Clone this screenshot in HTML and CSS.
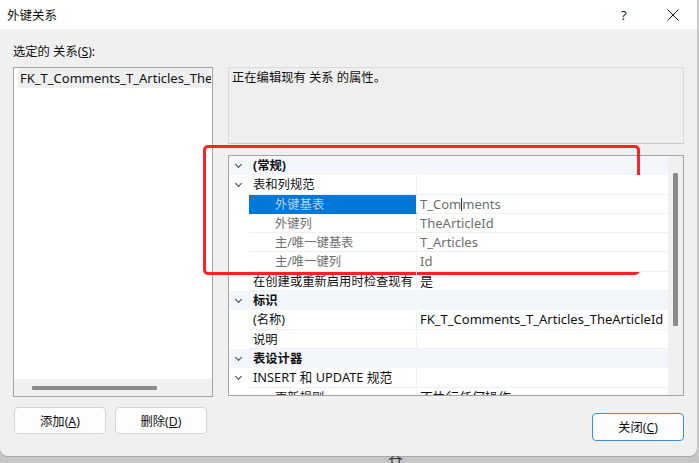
FILE: index.html
```html
<!DOCTYPE html>
<html lang="zh-CN">
<head>
<meta charset="utf-8">
<title>外键关系</title>
<link rel="stylesheet" href="styles.css">
</head>
<body>
<div class="screen">
  <div class="dialog">
    <div class="titlebar">
      <span class="title">外键关系</span>
      <span class="help">?</span>
      <span class="close-x">
        <svg width="12" height="12" viewBox="0 0 12 12"><path d="M0.5 0.5 L11.5 11.5 M11.5 0.5 L0.5 11.5" stroke="#1a1a1a" stroke-width="1" fill="none"/></svg>
      </span>
    </div>
    <div class="body">
      <div class="left">
        <div class="label">选定的 关系(<u>S</u>):</div>
        <div class="listbox">
          <div class="list-items">
            <div class="list-item">FK_T_Comments_T_Articles_TheArticleId</div>
          </div>
          <div class="hscroll"><div class="hthumb"></div></div>
        </div>
        <div class="btnrow">
          <button class="btn">添加(<u>A</u>)</button>
          <button class="btn">删除(<u>D</u>)</button>
        </div>
      </div>
      <div class="right">
        <div class="desc">正在编辑现有 关系 的属性。</div>
        <div class="grid">
          <div class="rows">
            <div class="row cat"><span class="gut"><i class="chev"></i></span><span class="catname">(常规)</span></div>
            <div class="row"><span class="gut"><i class="chev"></i></span><span class="name">表和列规范</span><span class="val"></span></div>
            <div class="row ro"><span class="gut"></span><span class="name sub sel">外键基表</span><span class="val">T_Com<span class="caret"></span>ments</span></div>
            <div class="row ro"><span class="gut"></span><span class="name sub">外键列</span><span class="val">TheArticleId</span></div>
            <div class="row ro"><span class="gut"></span><span class="name sub">主/唯一键基表</span><span class="val">T_Articles</span></div>
            <div class="row ro"><span class="gut"></span><span class="name sub">主/唯一键列</span><span class="val">Id</span></div>
            <div class="row"><span class="gut"></span><span class="name">在创建或重新启用时检查现有</span><span class="val">是</span></div>
            <div class="row cat"><span class="gut"><i class="chev"></i></span><span class="catname">标识</span></div>
            <div class="row"><span class="gut"></span><span class="name">(名称)</span><span class="val">FK_T_Comments_T_Articles_TheArticleId</span></div>
            <div class="row"><span class="gut"></span><span class="name">说明</span><span class="val"></span></div>
            <div class="row cat"><span class="gut"><i class="chev"></i></span><span class="catname">表设计器</span></div>
            <div class="row"><span class="gut"><i class="chev"></i></span><span class="name lat">INSERT 和 UPDATE 规范</span><span class="val"></span></div>
            <div class="row"><span class="gut"></span><span class="name sub">更新规则</span><span class="val">不执行任何操作</span></div>
          </div>
          <div class="vscroll"><div class="vthumb"></div></div>
        </div>
        <div class="closerow">
          <button class="btn primary">关闭(<u>C</u>)</button>
        </div>
      </div>
    </div>
    <div class="annot"></div>
  </div>
  <div class="backdrop"><span class="bg-glyph">谷</span></div>
</div>
</body>
</html>
```
FILE: styles.css
```css
* { box-sizing: border-box; }
html, body { margin: 0; padding: 0; }
body {
  width: 699px;
  height: 463px;
  overflow: hidden;
  background: #c6c6c6;
  font-family: "Noto Sans", "Noto Sans CJK SC", sans-serif;
  font-size: 12px;
  color: #111;
}
.screen { width: 699px; height: 463px; position: relative; }
.dialog {
  position: relative;
  width: 697px;
  height: 456px;
  background: #f0f0f0;
  border-radius: 0 0 8px 8px;
  overflow: hidden;
  box-shadow: 0 1px 0 #a9a9a9;
}
.titlebar {
  height: 29px;
  background: #ffffff;
  display: flex;
  align-items: center;
  padding-left: 7px;
}
.title { font-size: 12.5px; flex: 1; }
.help { font-size: 13px; width: 14px; margin-right: 32px; color: #222; }
.close-x { width: 12px; height: 12px; margin-right: 18px; display: flex; }
.body { display: flex; padding: 0 13px; height: 427px; }
.left { width: 200px; display: flex; flex-direction: column; }
.label { height: 38px; padding-top: 15px; line-height: 16px; font-size: 12.3px; }
.listbox {
  height: 330px;
  background: #fff;
  border: 1px solid #a2a2a2;
  display: flex;
  flex-direction: column;
}
.list-items { flex: 1; padding: 0 1px 0 4px; overflow: hidden; }
.list-item {
  height: 20px;
  line-height: 20px;
  background: #efefef;
  padding-left: 2px;
  white-space: nowrap;
  overflow: hidden;
  font-size: 13px;
}
.hscroll { height: 17px; background: #f0f0f0; display: flex; align-items: center; padding-left: 18px; }
.hthumb { width: 125px; height: 4px; background: #8a8a8a; border-radius: 1px; }
.btnrow { display: flex; gap: 9px; margin-top: 10px; padding-left: 1px; }
.btn {
  width: 92px;
  height: 27px;
  background: #fdfdfd;
  border: 1px solid #d5d5d5;
  border-radius: 4px;
  font-family: inherit;
  font-size: 12.3px;
  color: #111;
  padding: 0;
}
.right { margin-left: 15px; width: 456px; padding-top: 38px; display: flex; flex-direction: column; }
.desc {
  height: 77px;
  background: #efefef;
  border: 1px solid #dadada;
  border-bottom-color: #c9c9c9;
  padding: 2px 3px;
  line-height: 16px;
  font-size: 12.3px;
}
.grid {
  margin-top: 11px;
  height: 241px;
  border: 1px solid #a4a4a4;
  background: #fff;
  display: flex;
  overflow: hidden;
}
.rows { width: 439px; overflow: hidden; }
.row {
  height: 19.3px;
  display: flex;
  align-items: stretch;
  line-height: 19px;
  white-space: nowrap;
  font-size: 12.3px;
}
.gut { width: 20px; flex: none; position: relative; display: flex; align-items: center; justify-content: center; padding-right: 1px; }
.chev {
  width: 5px; height: 5px;
  border-right: 1.2px solid #444;
  border-bottom: 1.2px solid #444;
  transform: rotate(45deg);
  margin-top: -3px;
}
.cat { background: #f3f6fa; }
.catname { font-weight: bold; padding-left: 4px; }
.name {
  width: 168px;
  flex: none;
  padding-left: 4px;
  border-bottom: 1px solid #eff1f4;
  border-right: 1px solid #eff1f4;
  overflow: visible;
  position: relative;
  z-index: 1;
}
.name.lat { font-size: 12.8px; }
.name.sub { padding-left: 26px; overflow: hidden; }
.val {
  flex: 1;
  padding-left: 3px;
  border-bottom: 1px solid #eff1f4;
  overflow: hidden;
  background: #fff;
  position: relative;
  z-index: 2;
  font-size: 13px;
}
.row:nth-child(7) .val { background: transparent; }
.ro .name, .ro .val { color: #6e6e6e; }
.ro .name.sel { background: #0078d7; color: #b7d2ee; border-bottom-color: #0078d7; }
.caret {
  display: inline-block;
  width: 0;
  height: 13px;
  border-left: 1px solid #333;
  vertical-align: -2px;
}
.vscroll { flex: 1; background: #f0f0f0; padding: 17px 0 0 5px; }
.vthumb { width: 5px; height: 153px; background: #8a8a8a; border-radius: 1px; }
.closerow { display: flex; justify-content: flex-end; margin-top: 17px; }
.btn.primary { height: 28px; border-color: #3d8fd9; }
.annot {
  position: absolute;
  left: 203px;
  top: 145px;
  width: 437px;
  height: 130px;
  border: 3px solid #fe2424;
  border-radius: 5px;
  pointer-events: none;
}
.backdrop { height: 7px; overflow: hidden; position: relative; }
.bg-glyph {
  position: absolute;
  left: 388px;
  top: -10px;
  font-size: 15px;
  color: #333;
}
```
